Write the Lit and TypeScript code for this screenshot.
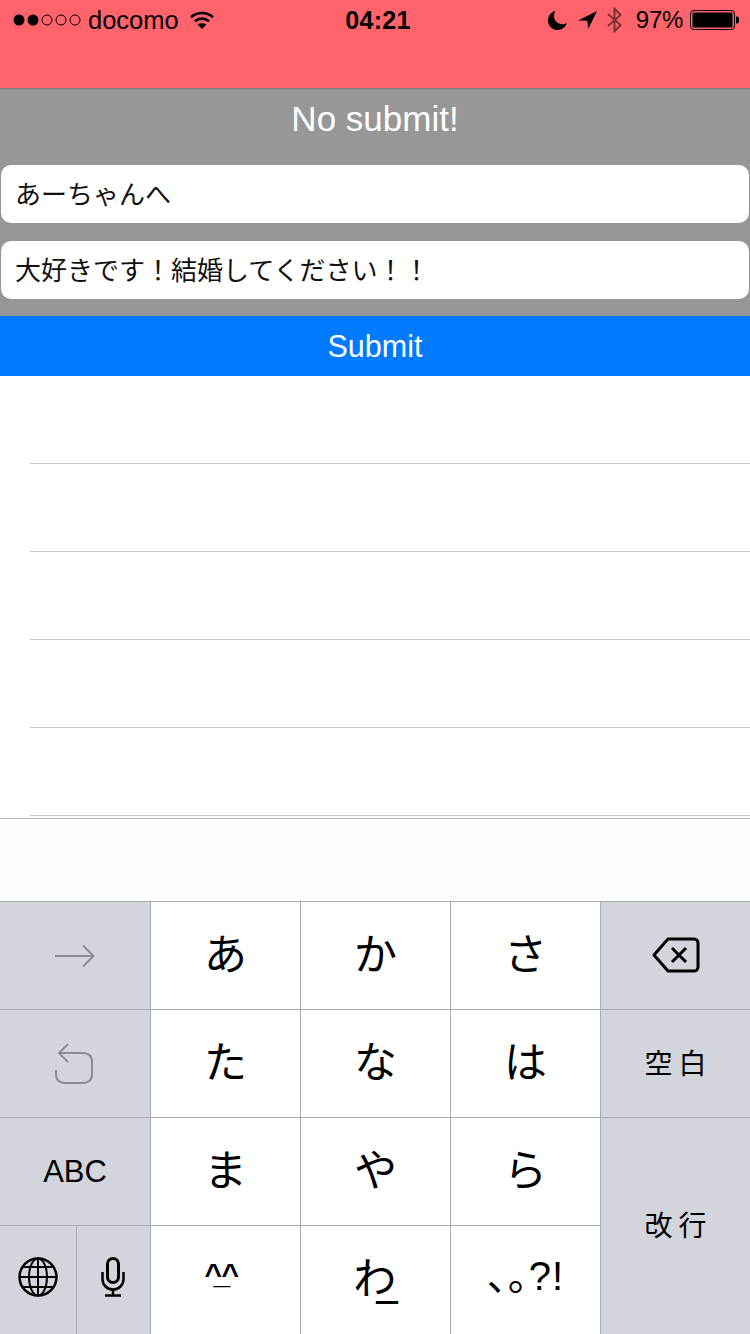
import { LitElement, html, css, svg } from "lit";
import { customElement } from "lit/decorators.js";

@customElement("app-root")
export class AppRoot extends LitElement {
  static styles = css`
    :host { display: block; width: 750px; height: 1334px; overflow: hidden; background: #fff; color: #000; font-family: "Liberation Sans", "Noto Sans CJK JP", sans-serif; }
    .top { height: 88px; background: #ff646c; border-bottom: 1px solid #7d7d7d; box-sizing: content-box; }
    .status { height: 40px; display: grid; grid-template-columns: 1fr auto 1fr; align-items: center; font-size: 25.5px; }
    .left { display: flex; align-items: center; padding-left: 13px; gap: 7px; }
    .carrier { margin-right: 4px; }
    .time { font-weight: 700; font-size: 25px; letter-spacing: .3px; margin-left: 6px; }
    .right { display: flex; justify-content: flex-end; align-items: center; padding-right: 11px; gap: 10px; }
    .pct { margin-left: 4px; font-size: 24px; letter-spacing: -.3px; }
    .batt { margin-left: -3px; }
    svg { display: block; }
    .form { background: #979797; height: 227px; display: flex; flex-direction: column; padding: 0 1px; box-sizing: border-box; }
    .title { height: 76px; flex: none; padding-bottom: 17px; box-sizing: border-box; display: flex; align-items: center; justify-content: center; color: #fff; font-size: 35px; }
    .field { height: 58px; flex: none; background: #fff; border-radius: 10px; display: flex; align-items: center; padding: 0 0 4px 14px; box-sizing: border-box; font-size: 26px; color: #111; margin-bottom: 18px; }
    .submit { height: 60px; background: #007aff; color: #fff; font-size: 30.5px; display: flex; align-items: center; justify-content: center; }
    .list { height: 442px; padding-left: 30px; }
    .row { height: 88px; border-bottom: 1px solid #c8c7cc; box-sizing: border-box; }
    .accessory { height: 83px; background: #fdfdfd; border-top: 1px solid #b3b5bc; box-sizing: border-box; }
    .kbd { display: grid; grid-template-columns: repeat(5, 150px); grid-template-rows: repeat(3, 108px) 109px; height: 433px; }
    .key { background: #fff; border-top: 1px solid #a9acb6; border-left: 1px solid #a9acb6; box-sizing: border-box; display: flex; align-items: center; justify-content: center; font-size: 43px; padding-bottom: 10px; }
    .key.fn { background: #d2d5dc; }
    .key.first { border-left: none; }
    .key.icon { padding-bottom: 0; }
    .key.back { padding-bottom: 2px; }
    .key.small { font-size: 28px; letter-spacing: 6px; padding-bottom: 3px; text-indent: 6px; }
    .key.abc { font-size: 31px; letter-spacing: 0; text-indent: 0; padding-bottom: 0; }
    .key.ret { grid-row: span 2; padding-bottom: 4px; }
    .split { display: grid; grid-template-columns: 76px 74px; }
    .key.gl { padding-bottom: 6px; }
    .key.mic { padding: 0 2px 6px 0; }
    .key.face { font-size: 30px; font-weight: 700; letter-spacing: -8.6px; padding: 0 16px 12px 0; }
    .key.wa { font-family: "DejaVu Sans", "Noto Sans CJK JP", sans-serif; letter-spacing: -20px; padding: 0 20px 10px 0; }
    .key.punct { font-size: 40px; font-feature-settings: "halt"; letter-spacing: 1px; padding-bottom: 14px; }
  `;

  private dots() {
    return html`<svg width="68" height="14" viewBox="0 0 68 14">
      <circle cx="6" cy="7" r="5.5" />
      <circle cx="20" cy="7" r="5.5" />
      ${[34, 48, 62].map((x) => svg`<circle cx=${x} cy="7" r="5" fill="none" stroke="#000" stroke-width="1" />`)}
    </svg>`;
  }

  private wifi() {
    return html`<svg width="24" height="18" viewBox="0 0 24 18" fill="none" stroke="#000" stroke-width="2.6">
      <path d="M1 6.2C7 .6 17 .6 23 6.2" />
      <path d="M5 10.2c4-3.4 10-3.4 14 0" />
      <path d="M12 18l-4.4-4.4c2.6-1.8 6.200-1.800 8.800 0z" fill="#000" stroke="none" />
    </svg>`;
  }

  private statusRight() {
    return html`
      <svg width="20" height="19" viewBox="0 0 20 19"><path d="M7.500 0C3 1 0 4.800 0 9.500 0 14.800 4.300 19 9.500 19c4.500 0 8.300-3 9.500-7.200-1.300 1-3 1.600-4.800 1.500C9.700 13.200 6 9.500 6 5c0-1.800.5-3.500 1.500-5z" /></svg>
      <svg width="19" height="18" viewBox="0 0 19 18"><path d="M19 0L0 9.500l9.300.2.900 8.300z" /></svg>
      <svg width="15" height="26" viewBox="0 0 15 26" fill="none" stroke="#000" stroke-width="2" opacity=".5"><path d="M1 7l12.500 11L7.500 24.500V1.500L13.500 8 1 19" /></svg>
      <span class="pct">97%</span>
      <svg class="batt" width="49" height="20" viewBox="0 0 49 20">
        <rect x=".5" y=".5" width="44" height="19" rx="3.500" fill="none" stroke="#000" />
        <rect x="2.500" y="2.500" width="40" height="15" rx="1.500" />
        <path d="M46 6.500h1a2 2 0 0 1 2 2v3a2 2 0 0 1-2 2h-1z" />
      </svg>`;
  }

  render() {
    return html`
      <div class="top">
        <div class="status">
          <div class="left">${this.dots()}<span class="carrier">docomo</span>${this.wifi()}</div>
          <div class="time">04:21</div>
          <div class="right">${this.statusRight()}</div>
        </div>
      </div>
      <div class="form">
        <div class="title">No submit!</div>
        <div class="field">あーちゃんへ</div>
        <div class="field">大好きです！結婚してください！！</div>
      </div>
      <div class="submit">Submit</div>
      <div class="list">
        ${[0, 1, 2, 3, 4].map(() => html`<div class="row"></div>`)}
      </div>
      <div class="accessory"></div>
      <div class="kbd">
        <div class="key fn first icon">
          <svg width="40" height="24" viewBox="0 0 40 24" fill="none" stroke="#8b8d92" stroke-width="2"><path d="M0 12h38M28 1.500L38.500 12 28 22.500" /></svg>
        </div>
        <div class="key">あ</div><div class="key">か</div><div class="key">さ</div>
        <div class="key fn icon back">
          <svg width="48" height="36" viewBox="0 0 48 36" fill="none" stroke="#000" stroke-width="3" stroke-linejoin="round"><path d="M16 2h26a4 4 0 0 1 4 4v24a4 4 0 0 1-4 4H16L2 18z" /><path d="M20 11l14 14M34 11L20 25" /></svg>
        </div>
        <div class="key fn first icon">
          <svg width="40" height="42" viewBox="0 0 40 42" fill="none" stroke="#8b8d92" stroke-width="2"><path d="M4 10h24c5 0 9 3 9 8v14c0 5-4 8-9 8H10c-5 0-9-3-9-8v-5" /><path d="M13 1L4 10l9 9" /></svg>
        </div>
        <div class="key">た</div><div class="key">な</div><div class="key">は</div>
        <div class="key fn small">空白</div>
        <div class="key fn first small abc">ABC</div>
        <div class="key">ま</div><div class="key">や</div><div class="key">ら</div>
        <div class="key fn small ret">改行</div>
        <div class="split">
          <div class="key fn first gl">
            <svg width="40" height="40" viewBox="0 0 40 40" fill="none" stroke="#000" stroke-width="2"><circle cx="20" cy="20" r="18.500" stroke-width="2.500" /><ellipse cx="20" cy="20" rx="9" ry="18.500" /><path d="M20 1.500v37M1.500 20h37M4.500 10h31M4.500 30h31" /></svg>
          </div>
          <div class="key fn mic">
            <svg width="24" height="40" viewBox="0 0 24 40" fill="none" stroke="#000" stroke-width="2.500"><rect x="6.500" y="1.500" width="11" height="24" rx="5.500" stroke-width="3" /><path d="M1.500 15v7c0 6 4.500 10.500 10.500 10.500S22.500 28 22.500 22v-7M12 32.500V38M4 38.500h16" /></svg>
          </div>
        </div>
        <div class="key face">^_^</div>
        <div class="key wa">わ_</div>
        <div class="key punct">、。?!</div>
      </div>
    `;
  }
}
